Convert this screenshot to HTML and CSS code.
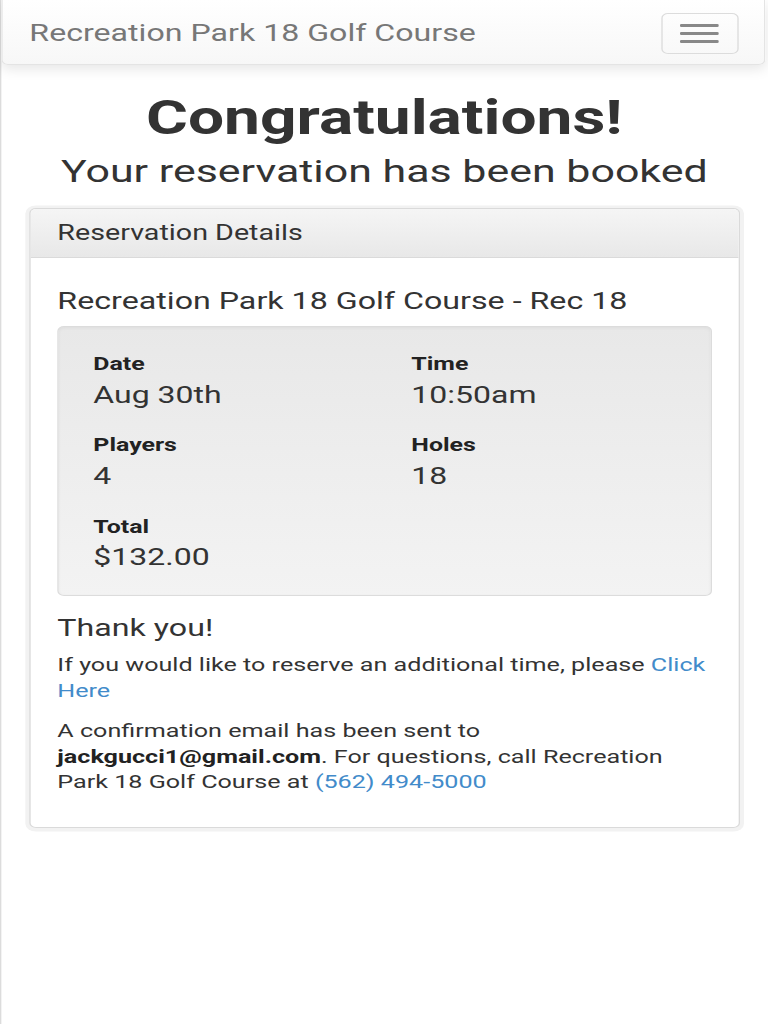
FILE: index.html
```html
<!DOCTYPE html>
<html lang="en">
<head>
<meta charset="utf-8">
<title>Reservation Confirmed</title>
<link rel="stylesheet" href="styles.css">
</head>
<body>
<div class="page">
  <nav class="navbar">
    <span class="brand">Recreation Park 18 Golf Course</span>
    <button class="toggle" type="button" aria-label="Menu">
      <span class="bar"></span><span class="bar"></span><span class="bar"></span>
    </button>
  </nav>
  <main class="content">
    <h1 class="title">Congratulations!</h1>
    <h2 class="subtitle">Your reservation has been booked</h2>
    <section class="panel">
      <div class="panel-heading">Reservation Details</div>
      <div class="panel-body">
        <h3 class="course">Recreation Park 18 Golf Course - Rec 18</h3>
        <div class="well">
          <div class="details">
            <div class="item"><div class="label">Date</div><div class="value">Aug 30th</div></div>
            <div class="item"><div class="label">Time</div><div class="value">10:50am</div></div>
            <div class="item"><div class="label">Players</div><div class="value">4</div></div>
            <div class="item"><div class="label">Holes</div><div class="value">18</div></div>
            <div class="item"><div class="label">Total</div><div class="value">$132.00</div></div>
          </div>
        </div>
        <h3 class="thanks">Thank you!</h3>
        <p class="text">If you would like to reserve an additional time, please <a href="#">Click Here</a></p>
        <p class="text">A confirmation email has been sent to <strong>jackgucci1@gmail.com</strong>. For questions, call Recreation Park 18 Golf Course at <a href="#">(562) 494-5000</a></p>
      </div>
    </section>
  </main>
</div>
</body>
</html>
```

FILE: styles.css
```css
html, body {
  margin: 0;
  padding: 0;
  background: #fff;
  overflow: hidden;
}

body {
  font-family: Roboto, "Liberation Sans", Arial, sans-serif;
  color: #333;
}

/* The reference is a phone capture stretched horizontally (4:3) */
.page {
  width: 574.5px;
  min-height: 1024px;
  border-left: 1.5px solid #dcdcdc;
  transform: scaleX(1.33333);
  transform-origin: 0 0;
  box-sizing: content-box;
}

.navbar {
  display: flex;
  align-items: center;
  justify-content: space-between;
  height: 64px;
  margin-right: 2px;
  border: 1px solid #e4e4e4;
  border-top: none;
  border-radius: 0 0 5px 5px;
  background: linear-gradient(to bottom, #ffffff 0%, #f7f7f7 100%);
  box-shadow: 0 4px 11px rgba(0, 0, 0, 0.1);
}

.brand {
  padding-left: 20px;
  font-size: 24.1px;
  color: #777;
  line-height: 28px;
  margin-top: 1px;
}

.toggle {
  display: flex;
  flex-direction: column;
  align-items: center;
  justify-content: center;
  gap: 5px;
  width: 57.5px;
  height: 41px;
  margin-right: 19px;
  margin-top: 2px;
  padding: 0;
  border: 1px solid #dcdcdc;
  border-radius: 5px;
  background: transparent;
}

.bar {
  display: block;
  width: 29px;
  height: 3px;
  border-radius: 1px;
  background: #888;
}

.content {
  padding: 0 21px;
}

.title {
  margin: 27px 0 0;
  font-size: 48px;
  line-height: 52.8px;
  font-weight: 700;
  text-align: center;
  color: #333;
}

.subtitle {
  margin: 9px 0 0;
  font-size: 32.2px;
  line-height: 35.2px;
  font-weight: 400;
  text-align: center;
  color: #333;
}

.panel {
  margin-top: 19px;
  border: 1px solid #dadada;
  border-radius: 5px;
  background: #fff;
  box-shadow: 0 0.5px 0 3px #f2f2f2;
}

.panel-heading {
  padding: 11.2px 20px;
  font-size: 21.5px;
  line-height: 25.6px;
  border-bottom: 1px solid #dadada;
  border-radius: 4px 4px 0 0;
  background: linear-gradient(to bottom, #f5f5f5 0%, #e8e8e8 100%);
}

.panel-body {
  padding: 30px 20px 16px;
}

.course,
.thanks {
  margin: 0;
  font-size: 24.15px;
  line-height: 26.4px;
  font-weight: 400;
}

.well {
  margin-top: 12px;
  padding: 25px 26px 20px;
  border: 1px solid #dcdcdc;
  border-radius: 5px;
  background: linear-gradient(to bottom, #e8e8e8 0%, #f3f3f3 100%);
  box-shadow: inset 0 1px 3px rgba(0, 0, 0, 0.05);
}

.details {
  display: grid;
  grid-template-columns: 238.5px 1fr;
  row-gap: 20.5px;
}

.label {
  font-size: 18.7px;
  line-height: 25.6px;
  font-weight: 700;
  color: #222;
}

.value {
  font-size: 24px;
  line-height: 35px;
  color: #333;
}

.thanks {
  margin-top: 18.5px;
}

.text {
  margin: 12px 0 15px;
  font-size: 18.85px;
  line-height: 25.6px;
}

.text + .text {
  margin-top: 0;
}

.text a {
  color: #428bca;
  text-decoration: none;
}

.text strong {
  font-weight: 700;
  color: #222;
}
```
